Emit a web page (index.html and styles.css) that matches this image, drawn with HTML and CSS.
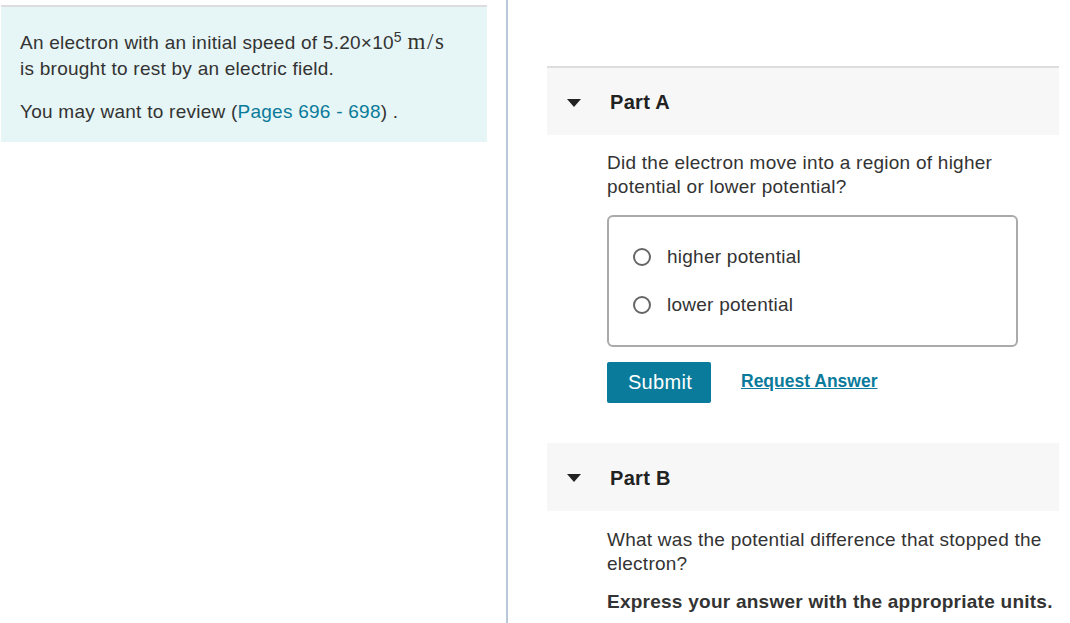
FILE: index.html
```html
<!DOCTYPE html>
<html>
<head>
<meta charset="utf-8">
<link rel="stylesheet" href="styles.css">
</head>
<body>
<div class="page">
  <aside class="left">
    <div class="intro">
      <p class="intro-p">An electron with an initial speed of 5.20×10<sup class="sup">5</sup> <span class="math">m/s</span><br>is brought to rest by an electric field.</p>
      <p class="intro-p review">You may want to review (<a class="link" href="#">Pages 696 - 698</a>) .</p>
    </div>
  </aside>
  <main class="right">
    <section class="part part-a">
      <div class="part-head first">
        <span class="caret"></span>
        <span class="part-title">Part A</span>
      </div>
      <div class="part-body">
        <p class="question">Did the electron move into a region of higher<br>potential or lower potential?</p>
        <div class="options">
          <label class="option"><span class="radio"></span><span class="opt-text">higher potential</span></label>
          <label class="option"><span class="radio"></span><span class="opt-text">lower potential</span></label>
        </div>
        <div class="actions">
          <button class="submit">Submit</button>
          <a class="request" href="#">Request Answer</a>
        </div>
      </div>
    </section>
    <section class="part part-b">
      <div class="part-head">
        <span class="caret"></span>
        <span class="part-title">Part B</span>
      </div>
      <div class="part-body">
        <p class="question">What was the potential difference that stopped the<br>electron?</p>
        <p class="instruction">Express your answer with the appropriate units.</p>
      </div>
    </section>
  </main>
</div>
</body>
</html>
```
FILE: styles.css
```css
html, body {
  margin: 0;
  padding: 0;
  background: #fff;
  font-family: "Liberation Sans", Arial, sans-serif;
  color: #333;
}
.page {
  display: flex;
  height: 623px;
  overflow: hidden;
}
.left {
  width: 505px;
  padding: 5px 0 0 1px;
  flex: none;
}
.intro {
  width: 448px;
  height: 113px;
  border-top: 2px solid #dddddd;
  background: #e6f5f5;
  padding: 22px 19px 0 19px;
}
.intro-p {
  margin: 0;
  font-size: 19px;
  letter-spacing: 0.25px;
  line-height: 26px;
}
.review {
  margin-top: 17px;
}
.sup {
  font-size: 14px;
  line-height: 0;
  vertical-align: 7px;
}
.math {
  font-family: "Liberation Serif", "Times New Roman", serif;
  font-size: 23px;
  letter-spacing: 1.6px;
}
.link {
  color: #0a7b9b;
  text-decoration: none;
}
.right {
  flex: 1;
  border-left: 2px solid #b8cad9;
  padding: 66px 11px 0 39px;
}
.part-head {
  display: flex;
  align-items: center;
  height: 68px;
  background: #f7f7f7;
}
.part-head.first {
  border-top: 2px solid #dddddd;
  height: 67px;
}
.caret {
  width: 0;
  height: 0;
  margin-left: 20px;
  margin-top: 2px;
  border-left: 7px solid transparent;
  border-right: 7px solid transparent;
  border-top: 8px solid #222;
}
.part-title {
  margin-left: 29px;
  margin-top: 2px;
  font-weight: bold;
  font-size: 20px;
  letter-spacing: 0.3px;
  color: #222;
}
.part-body {
  padding-left: 60px;
}
.question {
  margin: 16px 0 0;
  font-size: 19px;
  letter-spacing: 0.25px;
  line-height: 24px;
}
.options {
  margin-top: 16px;
  border: 2px solid #aaaaaa;
  border-radius: 6px;
  padding: 28px 0 28px 24px;
  display: flex;
  flex-direction: column;
  gap: 24px;
  box-sizing: border-box;
  height: 132px;
  width: 411px;
}
.option {
  display: flex;
  align-items: center;
  height: 24px;
}
.radio {
  width: 14px;
  height: 14px;
  border: 2px solid #666;
  border-radius: 50%;
  flex: none;
}
.opt-text {
  margin-left: 16px;
  font-size: 19px;
  letter-spacing: 0.25px;
}
.actions {
  display: flex;
  align-items: center;
  margin-top: 15px;
  gap: 30px;
}
.submit {
  width: 104px;
  height: 41px;
  border: none;
  border-radius: 2px;
  background: #0a7b9b;
  color: #fff;
  font-family: "Liberation Sans", Arial, sans-serif;
  font-size: 20px;
  letter-spacing: 0.3px;
  padding: 0 0 0 2px;
}
.request {
  color: #0a7b9b;
  font-weight: bold;
  font-size: 17.5px;
  text-decoration: underline;
  margin-top: -2px;
}
.part-b {
  margin-top: 40px;
}
.part-b .question {
  margin-top: 17px;
}
.instruction {
  margin: 14px 0 0;
  font-weight: bold;
  font-size: 19px;
  letter-spacing: 0.25px;
  line-height: 24px;
}
```
